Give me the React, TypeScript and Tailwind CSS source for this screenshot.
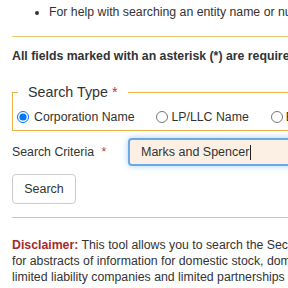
export default function App() {
  return (
    <div className="w-[288px] h-[288px] overflow-hidden bg-white text-[#333] font-['Liberation_Sans',Arial,sans-serif] text-[12.3px] leading-[15px]">
      <div className="w-[620px] pl-3">
        {/* aide */}
        <ul className="list-disc pl-[37px] pt-[5px] whitespace-nowrap">
          <li>For help with searching an entity name or number, please see the search tips below.</li>
        </ul>

        <div className="h-px bg-[#e8c76c] mt-[16px]" />

        <p className="font-bold mt-[12px] whitespace-nowrap">
          All fields marked with an asterisk (*) are required.
        </p>

        {/* type de recherche */}
        <fieldset className="mt-[20px] border border-[#efb046] pl-[4px] pb-[2px]">
          <legend className="ml-[1px] px-[10px] text-[14.3px] leading-[17px]">
            Search Type <span className="text-[#a94442]">*</span>
          </legend>
          <div className="flex items-center h-[22px] mt-[5px] whitespace-nowrap">
            <label className="flex items-center gap-[5px]">
              <input type="radio" name="type" defaultChecked className="m-0 w-[12px] h-[12px]" />
              Corporation Name
            </label>
            <label className="flex items-center gap-[3px] ml-[22px]">
              <input type="radio" name="type" className="m-0 w-[12px] h-[12px]" />
              LP/LLC Name
            </label>
            <label className="flex items-center gap-[3px] ml-[22px]">
              <input type="radio" name="type" className="m-0 w-[12px] h-[12px]" />
              Entity Number
            </label>
          </div>
        </fieldset>

        {/* critère */}
        <div className="flex items-center mt-[7px]">
          <div className="w-[116px] whitespace-nowrap">
            Search Criteria <span className="text-[#a94442] ml-[4px]">*</span>
          </div>
          <div className="flex items-center w-[300px] h-[28px] border-2 border-[#6aa9e6] rounded-[4px] bg-[#fcf0e5] pl-[11px] shadow-[0_0_6px_rgba(102,175,233,0.6)] text-[12.5px]">
            Marks and Spencer
            <span className="w-px h-[15px] bg-[#222] ml-[1px]" />
          </div>
        </div>

        <button className="mt-2 w-[64px] h-[30px] border border-[#ccc] rounded-[4px] bg-white text-[#333] text-[12.5px]">
          Search
        </button>

        <div className="h-px bg-[#e8c76c] mt-[13px]" />

        {/* avertissement */}
        <p className="mt-[19px] leading-[16px] whitespace-nowrap">
          <span className="font-bold text-[#a52a2a]">Disclaimer:</span> This tool allows you to search the Secretary of State's records
          <br />
          for abstracts of information for domestic stock, domestic nonprofit and qualified foreign corporations,
          <br />
          limited liability companies and limited partnerships registered in the state.
        </p>
      </div>
    </div>
  );
}
